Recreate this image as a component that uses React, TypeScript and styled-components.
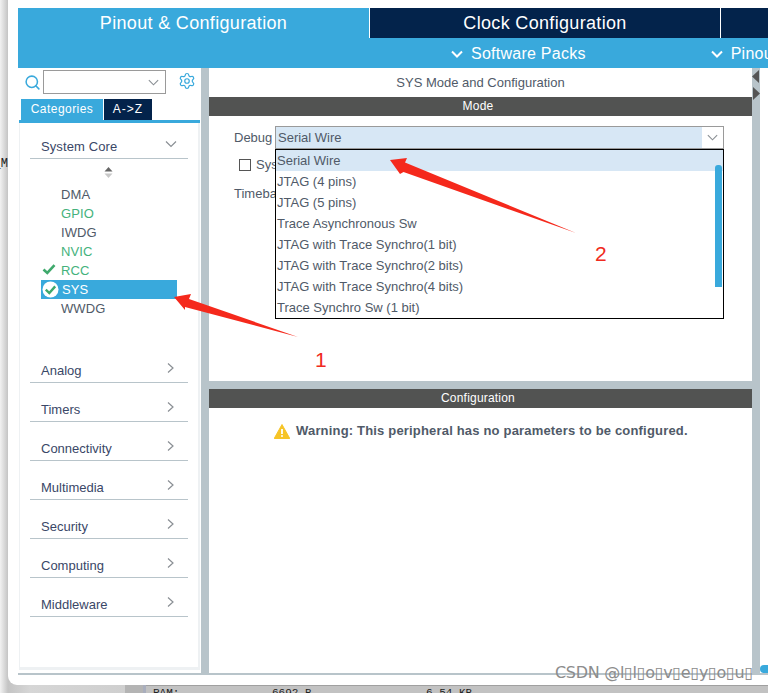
import React from "react";
import styled, { createGlobalStyle } from "styled-components";
import { Search, Settings } from "lucide-react";

const Global = createGlobalStyle`
  html, body { margin: 0; padding: 0; background: #fff; }
  body { font-family: "Liberation Sans", Arial, sans-serif; }
`;

const BLUE = "#39a9dc";
const NAVY = "#03234b";
const SPLIT = "#b8c4ca";
const BAR = "#525352";
const TEXT = "#505a68";

const Page = styled.div`
  position: relative;
  width: 768px;
  height: 693px;
  overflow: hidden;
  display: flex;
  flex-direction: column;
  background: linear-gradient(90deg, #f2f2f2 0, #c4c4c4 8px, #d6d6d6 30px, #cfcfcf 125px);
`;
const TopArea = styled.div`
  display: flex;
  height: 685px;
`;
const LeftStrip = styled.div`
  width: 8px;
  flex: none;
  overflow: hidden;
  padding-top: 157px;
  box-sizing: border-box;
  font: 12px "Liberation Mono", monospace;
  color: #222;
  direction: rtl;
`;
const Win = styled.div`
  width: 760px;
  box-sizing: border-box;
  padding: 8px 0 0 10px;
  background: #fff;
  border-bottom-left-radius: 9px;
  display: flex;
  flex-direction: column;
`;
const Header = styled.header`
  height: 60px;
  background: ${BLUE};
  flex: none;
  overflow: hidden;
`;
const TabRow = styled.div`
  display: flex;
  height: 30px;
  gap: 1px;
  background: #fff;
`;
const TopTab = styled.div<{ $active?: boolean; $w: number }>`
  width: ${(p) => p.$w}px;
  flex: none;
  background: ${(p) => (p.$active ? BLUE : NAVY)};
  color: #fff;
  font-size: 18px;
  line-height: 30px;
  text-align: center;
  letter-spacing: 0.33px;
`;
const SubBar = styled.div`
  height: 30px;
  box-sizing: border-box;
  display: flex;
  align-items: center;
  padding: 2px 0 0 432px;
  white-space: nowrap;
`;
const SubItem = styled.div`
  display: flex;
  align-items: center;
  gap: 7px;
  color: #fff;
  font-size: 16px;
  letter-spacing: 0.25px;
  margin-right: 124px;
`;
const Main = styled.div`
  display: flex;
  height: 605px;
  flex: none;
`;
const BottomLine = styled.div`
  height: 2px;
  background: ${SPLIT};
  flex: none;
`;
const LeftPanel = styled.aside`
  width: 183px;
  flex: none;
  display: flex;
  flex-direction: column;
`;
const SearchRow = styled.div`
  height: 28px;
  display: flex;
  align-items: flex-start;
  padding: 2px 0 0 6px;
  box-sizing: border-box;
  color: ${BLUE};
`;
const SearchIcon = styled(Search)`
  margin: 4px 2px 0 0;
`;
const GearIcon = styled(Settings)`
  margin: 2px 0 0 12px;
`;
const Combo = styled.div`
  width: 123px;
  height: 24px;
  box-sizing: border-box;
  border: 1px solid #9a9a9a;
  display: flex;
  align-items: center;
  justify-content: flex-end;
  padding-right: 5px;
`;
const CatTabs = styled.div`
  display: flex;
  margin: 3px 0 0 3px;
  gap: 1px;
  height: 21px;
`;
const CatTab = styled.div<{ $active?: boolean; $w: number }>`
  width: ${(p) => p.$w}px;
  background: ${(p) => (p.$active ? BLUE : NAVY)};
  color: #fff;
  font-size: 12px;
  letter-spacing: ${(p) => (p.$active ? 0.45 : 1)}px;
  line-height: 21px;
  text-align: center;
`;
const ListWrap = styled.div`
  flex: 1;
  margin: 0 1px 3px 1px;
  border-top: 3px solid ${BLUE};
  display: flex;
  flex-direction: column;
`;
const ListPanel = styled.div`
  flex: 1;
  margin: 0;
  border: solid #eef1f3;
  border-width: 0 2px 3px 1px;
  padding: 11px 10px 0 10px;
`;
const CatRow = styled.div<{ $first?: boolean }>`
  height: ${(p) => (p.$first ? 25 : 39)}px;
  box-sizing: border-box;
  border-bottom: 1px solid ${SPLIT};
  display: flex;
  align-items: flex-end;
  justify-content: space-between;
  padding: 0 10px 3px 11px;
  color: #3a4767;
  font-size: 13px;
  letter-spacing: ${(p) => (p.$first ? 0.1 : 0)}px;
  line-height: 16px;
`;
const ChevSlot = styled.span`
  display: block;
  line-height: 0;
  margin-bottom: 4px;
`;
const ScrollHint = styled.div`
  height: 26px;
  display: flex;
  align-items: center;
  justify-content: center;
  padding-right: 2px;
`;
const Items = styled.ul`
  list-style: none;
  margin: 0 0 26px 0;
  padding: 0;
`;
const Item = styled.li<{ $green?: boolean; $sel?: boolean }>`
  height: 19px;
  line-height: 19px;
  padding-left: ${(p) => (p.$sel ? 21 : 20)}px;
  margin-left: 11px;
  margin-right: 11px;
  position: relative;
  font-size: 13px;
  letter-spacing: 0.1px;
  color: ${(p) => (p.$sel ? "#fff" : p.$green ? "#44b27c" : TEXT)};
  background: ${(p) => (p.$sel ? BLUE : "transparent")};
`;
const ItemIcon = styled.svg`
  position: absolute;
  left: 1px;
  top: 1px;
`;
const VSplit = styled.div`
  width: 8px;
  flex: none;
  background: ${SPLIT};
`;
const RightSplit = styled(VSplit)`
  display: flex;
  flex-direction: column;
  padding-top: 2px;
  box-sizing: border-box;
  margin-bottom: -2px;
  gap: 3px;
`;
const RightPanel = styled.section`
  width: 543px;
  flex: none;
  display: flex;
  flex-direction: column;
`;
const Upper = styled.div`
  height: 313px;
  flex: none;
`;
const PanelTitle = styled.div`
  height: 28px;
  padding-top: 1px;
  line-height: 28px;
  text-align: center;
  color: ${TEXT};
  font-size: 13px;
`;
const DarkBar = styled.div`
  height: 19px;
  line-height: 19px;
  background: ${BAR};
  color: #fff;
  font-size: 12px;
  text-align: center;
  padding-right: 5px;
  letter-spacing: 0.2px;
`;
const HSplit = styled.div`
  height: 8px;
  background: ${SPLIT};
  flex: none;
`;
const Form = styled.div`
  padding: 10px 0 0 25px;
  color: ${TEXT};
  font-size: 13px;
`;
const FormRow = styled.div`
  display: flex;
  align-items: center;
  height: 23px;
  white-space: nowrap;
`;
const FieldLabel = styled.div`
  width: 41px;
  flex: none;
`;
const SelectWrap = styled.div`
  position: relative;
  width: 449px;
  height: 23px;
  flex: none;
  z-index: 2;
`;
const SelectBox = styled.div`
  height: 23px;
  box-sizing: border-box;
  border: solid #9a9a9a;
  border-width: 1px;
  background: #d7e7f5;
  display: flex;
  justify-content: space-between;
  align-items: center;
  padding-left: 2px;
`;
const SelectArrow = styled.div`
  width: 21px;
  height: 21px;
  background: #fff;
  display: flex;
  align-items: center;
  justify-content: center;
`;
const DropList = styled.ul`
  position: absolute;
  left: 0;
  top: 23px;
  width: 449px;
  height: 170px;
  box-sizing: border-box;
  margin: 0;
  padding: 0;
  list-style: none;
  border: 1px solid #000;
  background: #fff;
`;
const DropItem = styled.li<{ $sel?: boolean }>`
  height: 21px;
  line-height: 21px;
  padding-left: 1px;
  background: ${(p) => (p.$sel ? "#d7e7f5" : "transparent")};
`;
const DropThumb = styled.div`
  position: absolute;
  right: 1px;
  top: 15px;
  width: 7px;
  height: 122px;
  background: ${BLUE};
  border-radius: 3px 3px 0 0;
`;
const CheckRow = styled(FormRow)`
  height: 13px;
  margin: 9px 0 0 5px;
  gap: 5px;
`;
const CheckBox = styled.div`
  width: 12px;
  height: 12px;
  flex: none;
  box-sizing: border-box;
  border: 1px solid #555;
`;
const TimeRow = styled(FormRow)`
  margin-top: 12px;
  height: 20px;
`;
const Lower = styled.div`
  flex: 1;
  display: flex;
  flex-direction: column;
`;
const Warn = styled.div`
  display: flex;
  align-items: center;
  gap: 6px;
  padding: 14px 0 0 65px;
  font-size: 13px;
  font-weight: 700;
  letter-spacing: 0.18px;
  color: ${TEXT};
  line-height: 18px;
`;
const RightGutter = styled.div`
  width: 8px;
  flex: none;
  display: flex;
  align-items: flex-end;
`;
const Pill = styled.div`
  width: 8px;
  height: 8px;
  background: ${BLUE};
  border-radius: 4px 0 0 4px;
`;
const BottomStrip = styled.div`
  height: 8px;
  flex: none;
  display: flex;
  overflow: hidden;
`;
const StripGap = styled.div`
  width: 125px;
  flex: none;
`;
const StripDark = styled.div`
  width: 18px;
  flex: none;
  background: #b4b4b4;
`;
const StripBlue = styled.div`
  width: 3px;
  flex: none;
  background: #a9aebd;
`;
const Console = styled.div`
  flex: 1;
  background: #c2c2c2;
  border-top: 1px solid #a0a0a0;
  display: grid;
  grid-template-columns: 119px 154px 1fr;
  padding-left: 7px;
  font: 11px/14px "Liberation Mono", monospace;
  color: #222;
  white-space: pre;
`;
const ArrowLayer = styled.svg`
  position: absolute;
  left: 0;
  top: 0;
  pointer-events: none;
  z-index: 5;
`;
const Callout = styled.div<{ $x: number; $y: number }>`
  position: absolute;
  left: ${(p) => p.$x}px;
  top: ${(p) => p.$y}px;
  color: #f02a20;
  font-size: 21px;
  line-height: 24px;
  z-index: 6;
`;
const Watermark = styled.div`
  position: absolute;
  left: 555px;
  top: 663px;
  font: 16px/20px "DejaVu Sans", "Liberation Sans", sans-serif;
  color: #8c8c8c;
  letter-spacing: -0.3px;
  white-space: nowrap;
  z-index: 7;
`;

const Chevron = ({ dir, size = 14, color = "#8a8f94", width = 1.2 }: { dir: "down" | "right"; size?: number; color?: string; width?: number }) => (
  <svg width={size} height={size} viewBox="0 0 14 14" fill="none" stroke={color} strokeWidth={width}>
    {dir === "down" ? <path d="M2 4.5 L7 9.5 L12 4.5" /> : <path d="M4 2.5 L9 7 L4 11.5" />}
  </svg>
);

const items: { n: string; g?: boolean; check?: boolean; sel?: boolean }[] = [
  { n: "DMA" },
  { n: "GPIO", g: true },
  { n: "IWDG" },
  { n: "NVIC", g: true },
  { n: "RCC", g: true, check: true },
  { n: "SYS", sel: true },
  { n: "WWDG" },
];
const cats = ["Analog", "Timers", "Connectivity", "Multimedia", "Security", "Computing", "Middleware"];
const opts = [
  "Serial Wire",
  "JTAG (4 pins)",
  "JTAG (5 pins)",
  "Trace Asynchronous Sw",
  "JTAG with Trace Synchro(1 bit)",
  "JTAG with Trace Synchro(2 bits)",
  "JTAG with Trace Synchro(4 bits)",
  "Trace Synchro Sw (1 bit)",
];

export default function App() {
  return (
    <Page>
      <Global />
      <TopArea>
        <LeftStrip>M_</LeftStrip>
        <Win>
          <Header>
            <TabRow>
              <TopTab $active $w={351}>Pinout &amp; Configuration</TopTab>
              <TopTab $w={350}>Clock Configuration</TopTab>
              <TopTab $w={47} />
            </TabRow>
            <SubBar>
              <SubItem>
                <Chevron dir="down" color="#fff" width={2} />
                Software Packs
              </SubItem>
              <SubItem>
                <Chevron dir="down" color="#fff" width={2} />
                Pinout
              </SubItem>
            </SubBar>
          </Header>
          <Main>
            <LeftPanel>
              <SearchRow>
                <SearchIcon size={17} strokeWidth={2.2} />
                <Combo>
                  <Chevron dir="down" size={13} />
                </Combo>
                <GearIcon size={18} strokeWidth={1.6} />
              </SearchRow>
              <CatTabs>
                <CatTab $active $w={82}>Categories</CatTab>
                <CatTab $w={48}>A-&gt;Z</CatTab>
              </CatTabs>
              <ListWrap>
                <ListPanel>
                  <CatRow $first>
                    System Core
                    <ChevSlot>
                      <Chevron dir="down" />
                    </ChevSlot>
                  </CatRow>
                  <ScrollHint>
                    <svg width="9" height="11" viewBox="0 0 9 11">
                      <path d="M4.5 0 L8.5 4.6 H0.5 Z" fill="#666" />
                      <path d="M4.5 11 L8.5 6.4 H0.5 Z" fill="#c8c8c8" />
                    </svg>
                  </ScrollHint>
                  <Items>
                    {items.map((it) => (
                      <Item key={it.n} $green={it.g} $sel={it.sel}>
                        {it.check && (
                          <ItemIcon width="14" height="14" viewBox="0 0 14 14">
                            <path d="M1.5 7.5 L5.3 11 L12.5 3.2" fill="none" stroke="#3fa96c" strokeWidth="2.6" />
                          </ItemIcon>
                        )}
                        {it.sel && (
                          <ItemIcon width="17" height="17" viewBox="0 0 17 17">
                            <circle cx="8.5" cy="8.5" r="8" fill="#fff" />
                            <path d="M3.8 8.6 L7.3 12 L13.2 5.4" fill="none" stroke="#3fa96c" strokeWidth="2.4" />
                          </ItemIcon>
                        )}
                        {it.n}
                      </Item>
                    ))}
                  </Items>
                  {cats.map((c) => (
                    <CatRow key={c}>
                      {c}
                      <ChevSlot>
                        <Chevron dir="right" />
                      </ChevSlot>
                    </CatRow>
                  ))}
                </ListPanel>
              </ListWrap>
            </LeftPanel>
            <VSplit />
            <RightPanel>
              <Upper>
                <PanelTitle>SYS Mode and Configuration</PanelTitle>
                <DarkBar>Mode</DarkBar>
                <Form>
                  <FormRow>
                    <FieldLabel>Debug</FieldLabel>
                    <SelectWrap>
                      <SelectBox>
                        Serial Wire
                        <SelectArrow>
                          <Chevron dir="down" size={13} />
                        </SelectArrow>
                      </SelectBox>
                      <DropList>
                        {opts.map((o, i) => (
                          <DropItem key={o} $sel={i === 0}>{o}</DropItem>
                        ))}
                        <DropThumb />
                      </DropList>
                    </SelectWrap>
                  </FormRow>
                  <CheckRow>
                    <CheckBox />
                    Sys
                  </CheckRow>
                  <TimeRow>Timeba</TimeRow>
                </Form>
              </Upper>
              <HSplit />
              <Lower>
                <DarkBar>Configuration</DarkBar>
                <Warn>
                  <svg width="16" height="15" viewBox="0 0 16 15">
                    <path d="M8 0.5 L15.8 14.5 H0.2 Z" fill="#f6c427" stroke="#f6c427" strokeLinejoin="round" />
                    <path d="M8 5 V10" stroke="#fff" strokeWidth="1.8" />
                    <circle cx="8" cy="12.1" r="1" fill="#fff" />
                  </svg>
                  Warning: This peripheral has no parameters to be configured.
                </Warn>
              </Lower>
            </RightPanel>
            <RightSplit>
              <svg width="8" height="14" viewBox="0 0 8 14">
                <path d="M7 0 L0 6.5 L7 13 Z" fill="#555" />
              </svg>
              <svg width="8" height="14" viewBox="0 0 8 14">
                <path d="M1 0 L8 6.5 L1 13 Z" fill="#555" />
              </svg>
            </RightSplit>
            <RightGutter>
              <Pill />
            </RightGutter>
          </Main>
          <BottomLine />
        </Win>
      </TopArea>
      <BottomStrip>
        <StripGap />
        <StripDark />
        <StripBlue />
        <Console>
          <span>RAM:</span>
          <span>6692 B</span>
          <span>6.54 KB</span>
        </Console>
      </BottomStrip>
      <ArrowLayer width="768" height="693" viewBox="0 0 768 693">
        <polygon points="390,160 407,158 405,162.5 576,233 403.5,172 400,174" fill="#f5291c" />
        <polygon points="174,297 191,294 189,299 298,337 185,307 185,310" fill="#f5291c" />
      </ArrowLayer>
      <Callout $x={315} $y={348}>1</Callout>
      <Callout $x={595} $y={242}>2</Callout>
      <Watermark>CSDN @l▯l▯o▯v▯e▯y▯o▯u▯</Watermark>
    </Page>
  );
}
